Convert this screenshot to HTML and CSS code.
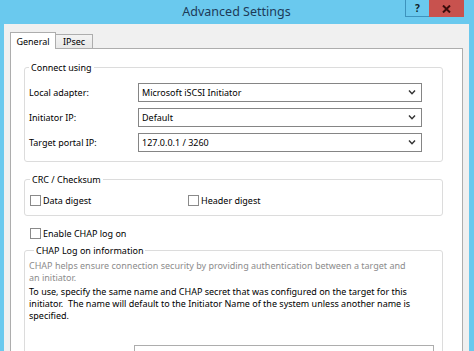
FILE: index.html
```html
<!DOCTYPE html>
<html lang="en">
<head>
    <meta charset="UTF-8">
    <title>Advanced Settings</title>
    <link rel="stylesheet" href="styles.css">
</head>
<body>

<div class="window">
    <!-- Title bar -->
    <div class="titlebar">
        <span></span>
        <h1 class="title">Advanced Settings</h1>
        <div class="caption-buttons">
            <button class="cap-btn help">?</button>
            <button class="cap-btn close">
                <svg width="9" height="8" viewBox="0 0 9 8"><path d="M1 0.5 L8 7.5 M8 0.5 L1 7.5" stroke="#3b0d0b" stroke-width="2"/></svg>
            </button>
        </div>
    </div>

    <div class="client">
        <div class="tabs">
            <div class="tab active">General</div>
            <div class="tab">IPsec</div>
        </div>

        <div class="tab-panel">
            <fieldset class="group connect">
                <legend>Connect using</legend>
                <div class="form-grid">
                    <label>Local adapter:</label>
                    <div class="select"><span>Microsoft iSCSI Initiator</span><svg class="chev" width="8" height="5" viewBox="0 0 8 5"><path d="M1 0.5 L4 3.8 L7 0.5" fill="none" stroke="#333" stroke-width="1.4"/></svg></div>
                    <label>Initiator IP:</label>
                    <div class="select"><span>Default</span><svg class="chev" width="8" height="5" viewBox="0 0 8 5"><path d="M1 0.5 L4 3.8 L7 0.5" fill="none" stroke="#333" stroke-width="1.4"/></svg></div>
                    <label>Target portal IP:</label>
                    <div class="select"><span>127.0.0.1 / 3260</span><svg class="chev" width="8" height="5" viewBox="0 0 8 5"><path d="M1 0.5 L4 3.8 L7 0.5" fill="none" stroke="#333" stroke-width="1.4"/></svg></div>
                </div>
            </fieldset>

            <fieldset class="group crc">
                <legend>CRC / Checksum</legend>
                <div class="check-row">
                    <div class="check"><span class="box"></span>Data digest</div>
                    <div class="check"><span class="box"></span>Header digest</div>
                </div>
            </fieldset>

            <div class="check enable-chap"><span class="box"></span>Enable CHAP log on</div>

            <fieldset class="group chap">
                <legend>CHAP Log on information</legend>
                <p class="note">CHAP helps ensure connection security by providing authentication between a target and<br>an initiator.</p>
                <p class="info">To use, specify the same name and CHAP secret that was configured on the target for this<br>initiator.&nbsp; The name will default to the Initiator Name of the system unless another name is<br>specified.</p>
                <div class="name-input"></div>
            </fieldset>
        </div>
    </div>
</div>

</body>
</html>
```

FILE: styles.css
```css
body {
    margin: 0;
    background-color: #6ac9ee;
    font-family: "Noto Sans", sans-serif;
    font-size: 9px;
    color: #000;
    overflow: hidden;
}

.window {
    height: 351px;
    box-sizing: border-box;
    display: flex;
    flex-direction: column;
    padding: 0 5px 0 4px;
    overflow: hidden;
}

/* Title bar */
.titlebar {
    height: 24px;
    flex: none;
    display: grid;
    grid-template-columns: 1fr auto 1fr;
    align-items: start;
}

.title {
    margin: 0;
    font-size: 12.5px;
    font-weight: normal;
    line-height: 24px;
    color: #1d3a58;
}

.caption-buttons {
    justify-self: end;
    display: flex;
    margin-right: 5px;
}

.cap-btn {
    height: 17px;
    padding: 0;
    margin: 0;
    border: none;
    font-family: "Noto Sans", sans-serif;
    display: flex;
    align-items: center;
    justify-content: center;
}

.help {
    width: 24px;
    background-color: #6ac9ee;
    border: 1px solid #3d93bd;
    border-top: none;
    border-right: none;
    font-size: 10px;
    font-weight: bold;
    color: #0d1c28;
}

.close {
    width: 35px;
    background-color: #c8524e;
}

/* Client area */
.client {
    flex: 1;
    min-height: 0;
    display: flex;
    flex-direction: column;
    background-color: #f0f0f0;
    padding: 8px 6px 0;
}

.tabs {
    display: flex;
    align-items: flex-end;
    height: 17px;
    margin-bottom: -1px;
    position: relative;
}

.tab {
    box-sizing: border-box;
    display: flex;
    align-items: center;
    justify-content: center;
    border: 1px solid #adadad;
    border-bottom: none;
}

.tab.active {
    width: 46px;
    height: 17px;
    background-color: #fff;
}

.tab:not(.active) {
    width: 37px;
    height: 14px;
    margin-bottom: 1px;
    border-left: none;
    background: linear-gradient(#f3f3f3, #e8e8e8);
}

.tab-panel {
    flex: 1;
    background-color: #fff;
    border: 1px solid #adadad;
    border-bottom: none;
    padding: 0 19px 0 13px;
}

/* Group boxes */
.group {
    margin: 12px 0 0;
    border: 1px solid #dcdcdc;
    border-radius: 3px;
    padding: 9px 20px 9px 4px;
    min-width: 0;
}

.group legend {
    padding: 0 2px;
    line-height: 13px;
}

.form-grid {
    display: grid;
    grid-template-columns: 109px 1fr;
    row-gap: 6px;
    align-items: center;
}

.select {
    height: 19px;
    box-sizing: border-box;
    border: 1px solid #858585;
    background-color: #fff;
    display: flex;
    align-items: center;
    justify-content: space-between;
    padding: 0 5px 0 3px;
}

.crc {
    margin-top: 11px;
    padding: 8px 20px 8px 5px;
}

.check-row {
    display: grid;
    grid-template-columns: 158px auto;
}

.check {
    display: flex;
    align-items: center;
    gap: 2px;
    height: 13px;
}

.box {
    width: 11px;
    height: 11px;
    box-sizing: border-box;
    border: 1px solid #8a8a8a;
    background-color: #fff;
}

.enable-chap {
    margin: 11px 0 0 6px;
}

.chap {
    margin-top: 4px;
    padding: 3px 20px 0 4px;
}

.chap legend {
    margin-left: 5px;
}

.note {
    margin: 0;
    line-height: 12px;
    color: #8c8c8c;
}

.info {
    margin: 2px 0 0;
    line-height: 12px;
}

.name-input {
    margin: 23px 0 0 105px;
    width: 300px;
    height: 20px;
    box-sizing: border-box;
    border: 1px solid #adadad;
    background-color: #fff;
}
```
